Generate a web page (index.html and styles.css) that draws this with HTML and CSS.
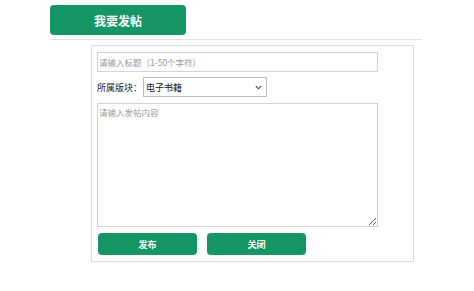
FILE: index.html
```html
<!DOCTYPE html>
<html lang="zh-CN">
<head>
<meta charset="utf-8">
<link rel="stylesheet" href="styles.css">
</head>
<body>
<div class="header">
  <div class="tab">我要发帖</div>
</div>
<div class="box">
  <input class="title-input" type="text" placeholder="请输入标题（1-50个字符）">
  <div class="row">
    <span class="label">所属版块：</span>
    <div class="select-wrap">
      <select class="board">
        <option>电子书籍</option>
      </select>
      <svg class="arrow" width="7" height="5" viewBox="0 0 7 5"><path d="M0.8 1 L3.5 3.8 L6.2 1" fill="none" stroke="#555" stroke-width="1.1"/></svg>
    </div>
  </div>
  <textarea class="content" placeholder="请输入发帖内容"></textarea>
  <div class="actions">
    <button class="btn">发布</button>
    <button class="btn">关闭</button>
  </div>
</div>
</body>
</html>
```

FILE: styles.css
```css
html, body {
  margin: 0;
  padding: 0;
  background: #fff;
  font-family: "Noto Sans CJK SC", "Noto Sans", sans-serif;
}
.header {
  margin-left: 50px;
  width: 372px;
  padding-top: 5px;
  padding-bottom: 4px;
  border-bottom: 1px solid #e2e2e2;
}
.tab {
  width: 136px;
  height: 30px;
  background: #169664;
  border-radius: 4px;
  color: #fff;
  font-size: 12px;
  font-weight: bold;
  display: flex;
  align-items: center;
  justify-content: center;
}
.box {
  margin-top: 5px;
  margin-left: 91px;
  width: 316px;
  border: 1px solid #dedede;
  padding: 6px 0 6px 5px;
  box-sizing: content-box;
  display: flex;
  flex-direction: column;
}
.title-input {
  box-sizing: border-box;
  width: 281px;
  height: 20px;
  border: 1px solid #d3d3d3;
  padding: 0 1px;
  font-size: 8.5px;
  font-family: inherit;
  margin: 0;
  outline: none;
}
.title-input::placeholder, .content::placeholder {
  color: #9a9a9a;
}
.row {
  display: flex;
  align-items: center;
  margin-top: 5px;
  height: 20px;
}
.label {
  font-size: 9px;
  color: #222;
  width: 46px;
}
.select-wrap {
  position: relative;
  width: 124px;
  height: 20px;
}
.board {
  display: block;
  appearance: none;
  -webkit-appearance: none;
  box-sizing: border-box;
  width: 124px;
  height: 20px;
  border: 1px solid #bdbdbd;
  border-radius: 0;
  background: #fff;
  font-size: 9px;
  font-family: inherit;
  color: #111;
  padding: 0 2px;
  margin: 0;
  outline: none;
}
.arrow {
  position: absolute;
  right: 5px;
  top: 8px;
  pointer-events: none;
}
.content {
  box-sizing: border-box;
  width: 281px;
  height: 124px;
  margin: 6px 0 0 0;
  border: 1px solid #d3d3d3;
  padding: 2px 1px;
  font-size: 8.5px;
  font-family: inherit;
  outline: none;
  resize: both;
}
.actions {
  display: flex;
  gap: 10px;
  margin-top: 6px;
  padding-left: 1px;
}
.btn {
  width: 99px;
  height: 22px;
  border: none;
  border-radius: 4px;
  background: #169664;
  color: #fff;
  font-size: 9px;
  font-weight: bold;
  font-family: inherit;
  padding: 0;
  margin: 0;
}
```
